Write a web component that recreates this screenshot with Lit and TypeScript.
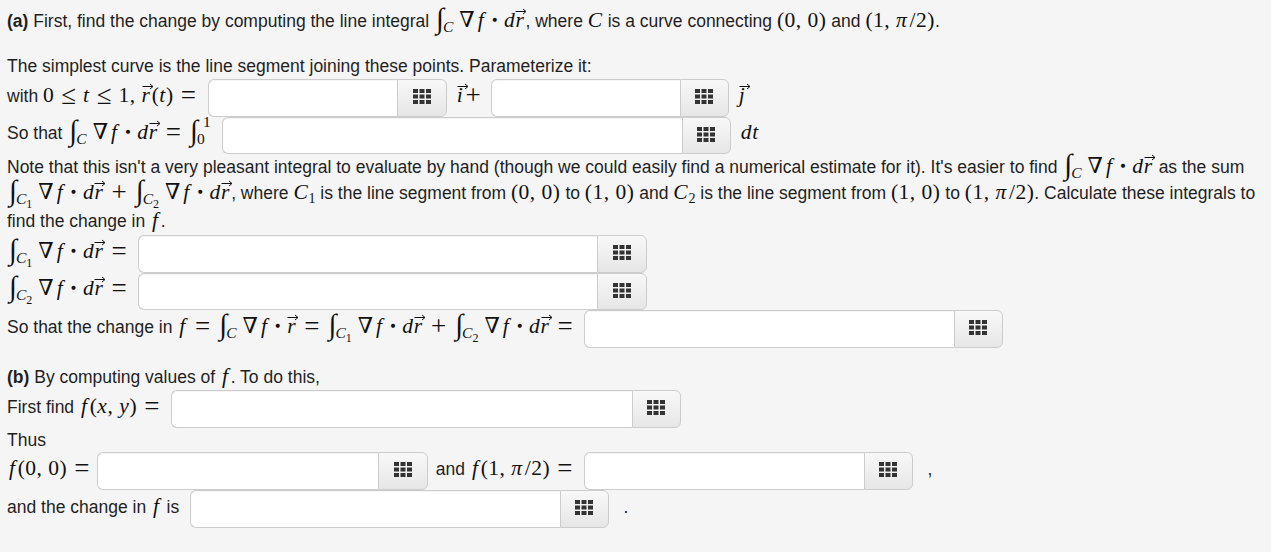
import { LitElement, html, css, svg } from "lit";
import { customElement } from "lit/decorators.js";

const i = (s: string) => html`<i class="mi">${s}</i>`;
const f = html`<i class="mi ff">f</i>`;
const n = (s: string) => html`<span class="mn">${s}</span>`;
const rel = (s: string, cls = "") => html`<span class="mn rel ${cls}">${s}</span>`;
const arrow = html`<svg class="arr" width="12" height="7" viewBox="0 0 12 7"><path d="M0.5 3.5H10.5M8 1L11 3.5L8 6" fill="none" stroke="#111" stroke-width="1"/></svg>`;
const vec = (s: string) => html`<span class="vec">${arrow}<i class="mi">${s}</i></span>`;
const int = (sub: string, idx = "") => html`<span class="int"><span class="sym">∫</span><span class="lim"><i>${sub}</i>${idx ? html`<span class="idx">${idx}</span>` : ""}</span></span>`;
const int01 = html`<span class="int"><span class="sym">∫</span><span class="lim">0<span class="sup">1</span></span></span>`;
const grad = html`<span class="mn nabla">∇</span>${f}<span class="mn dot">⋅</span>`;
const gdr = html`${grad}${i("d")}${vec("r")}`;
const eq = rel("=");
const pi = html`<i class="mi pi">π</i>`;
const pi12 = html`${n("(1, ")}${pi}${n("/2)")}`;
const ci = (k: string) => html`${i("C")}<span class="sub">${k}</span>`;

function widget(field: number, button = 49) {
  return html`<span class="w"><span class="field" style="width:${field}px"></span><span class="btn" style="width:${button}px">
    <svg width="18" height="15" viewBox="0 0 18 15"><g fill="#333">
      ${[0, 1, 2].flatMap((r) => [0, 1, 2].map((c) => svg`<rect x="${c * 6.5}" y="${r * 5.5}" width="5" height="4"></rect>`))}
    </g></svg></span></span>`;
}
const lbl = (w: number, c: unknown, cls = "") => html`<span class="lbl ${cls}" style="width:${w}px">${c}</span>`;

@customElement("app-root")
export class AppRoot extends LitElement {
  static styles = css`
    :host { display: block; width: 1271px; height: 552px; background: #f5f5f5; box-sizing: border-box; padding: 8px 0 0 7px; overflow: hidden;
      font: 17.5px "Liberation Sans", Arial, sans-serif; color: #1f1f1f; }
    .r { display: flex; align-items: center; white-space: pre; }
    .t26 { height: 26px; } .t27 { height: 27px; } .t28 { height: 28px; } .t24 { height: 24px; }
    .h38 { height: 38px; } .h37 { height: 37px; }
    .h38 > span:not(.w), .h37 > span:not(.w) { margin-bottom: 4px; }
    .mt19 { margin-top: 19px; } .mt16 { margin-top: 16px; }
    .lbl { flex: none; display: block; box-sizing: border-box; }
    .pad3 { padding-left: 3px; }
    b { font-weight: 700; }
    .mi, .mn, .lim { font-family: "Liberation Serif", "DejaVu Serif", serif; font-size: 21.5px; color: #111; line-height: 0; letter-spacing: .5px; }
    .mi { font-style: italic; letter-spacing: .7px; }
    .ff { padding: 0 2px; }
    .pi { padding-right: 2px; }
    .nabla { font-size: 22px; margin-right: 1px; font-family: "DejaVu Serif", serif; letter-spacing: 0; }
    .dot { margin: 0 5px 0 4px; font-weight: 700; letter-spacing: 0; }
    .rel { margin: 0 7px; font-size: 27px; letter-spacing: 0; position: relative; top: 2px; }
    .tight { margin-left: 1px; margin-right: 0; }
    .vec { position: relative; display: inline-block; line-height: 0; padding-right: 1px; }
    .arr { position: absolute; left: 0; top: -12px; }
    .int { display: inline-block; margin: 0 6px 0 2px; white-space: pre; line-height: 0; }
    .sym { font-family: "Liberation Serif", serif; font-size: 29px; font-style: italic; color: #111; line-height: 0; position: relative; top: 1px; }
    .lim { font-size: 15.5px; position: relative; top: 5px; margin-left: -1px; letter-spacing: 0; }
    .idx { font-family: "Liberation Serif", serif; font-size: 12px; font-style: normal; position: relative; top: 4px; line-height: 0; }
    .sub { font-family: "Liberation Serif", serif; font-size: 14px; color: #111; position: relative; top: 4px; line-height: 0; }
    .sup { position: absolute; left: 6px; top: -8px; font-size: 15.5px; }
    .w { flex: none; display: flex; height: 100%; box-sizing: border-box; padding: 0; }
    .field { display: block; box-sizing: border-box; height: 100%; background: #fff; border: 1px solid #ccc; border-right: 0; border-radius: 6px 0 0 6px; box-shadow: inset 0 1px 1px rgba(0,0,0,.04); }
    .btn { display: flex; align-items: center; justify-content: center; box-sizing: border-box; height: 100%; background: linear-gradient(#f8f8f8, #e6e6e6); border: 1px solid #ccc; border-radius: 0 6px 6px 0; }
    .btn svg { margin: 0 1px 3px 0; }
  `;
  render() {
    return html`
      <div class="r t26"><span><b>(a)</b> First, find the change by computing the line integral ${int("C")}${gdr}, where ${i("C")} is a curve connecting ${n("(0, 0)")} and ${pi12}.</span></div>
      <div class="r t26 mt19"><span>The simplest curve is the line segment joining these points. Parameterize it:</span></div>
      <div class="r h38">${lbl(201, html`with ${n("0")}${rel("≤")}${i("t")}${rel("≤")}${n("1, ")}${vec("r")}${n("(")}${i("t")}${n(")")}${eq}`)}${widget(189, 50)}${lbl(44, html`  ${vec("i")}${rel("+", "tight")}`)}${widget(189, 49)}<span>  ${vec("j")}</span></div>
      <div class="r h37">${lbl(215, html`So that ${int("C")}${gdr}${eq}${int01}`)}${widget(460, 49)}<span>  ${i("dt")}</span></div>
      <div class="r t26"><span>Note that this isn't a very pleasant integral to evaluate by hand (though we could easily find a numerical estimate for it). It's easier to find ${int("C")}${gdr} as the sum</span></div>
      <div class="r t27"><span>${int("C", "1")}${gdr}${rel("+")}${int("C", "2")}${gdr}, where ${ci("1")} is the line segment from ${n("(0, 0)")} to ${n("(1, 0)")} and ${ci("2")} is the line segment from ${n("(1, 0)")} to ${pi12}. Calculate these integrals to</span></div>
      <div class="r t28"><span>find the change in ${f}.</span></div>
      <div class="r h38">${lbl(131, html`${int("C", "1")}${gdr}${eq}`)}${widget(459, 50)}</div>
      <div class="r h37">${lbl(131, html`${int("C", "2")}${gdr}${eq}`)}${widget(459, 50)}</div>
      <div class="r h38">${lbl(577, html`So that the change in ${f}${eq}${int("C")}${grad}${vec("r")}${eq}${int("C", "1")}${gdr}${rel("+")}${int("C", "2")}${gdr}${eq}`)}${widget(370, 49)}</div>
      <div class="r t26 mt16"><span><b>(b)</b> By computing values of ${f}. To do this,</span></div>
      <div class="r h38">${lbl(164, html`First find ${f}${n("(")}${i("x")}${n(", ")}${i("y")}${n(")")}${eq}`)}${widget(461, 49)}</div>
      <div class="r t24"><span>Thus</span></div>
      <div class="r h38">${lbl(90, html`${f}${n("(0, 0)")}${eq}`)}${widget(281, 50)}${lbl(156, html` and ${f}${pi12}${eq}`, "pad3")}${widget(280, 49)}<span>   ,</span></div>
      <div class="r h38">${lbl(183, html`and the change in ${f} is`)}${widget(370, 49)}<span>   .</span></div>
    `;
  }
}
